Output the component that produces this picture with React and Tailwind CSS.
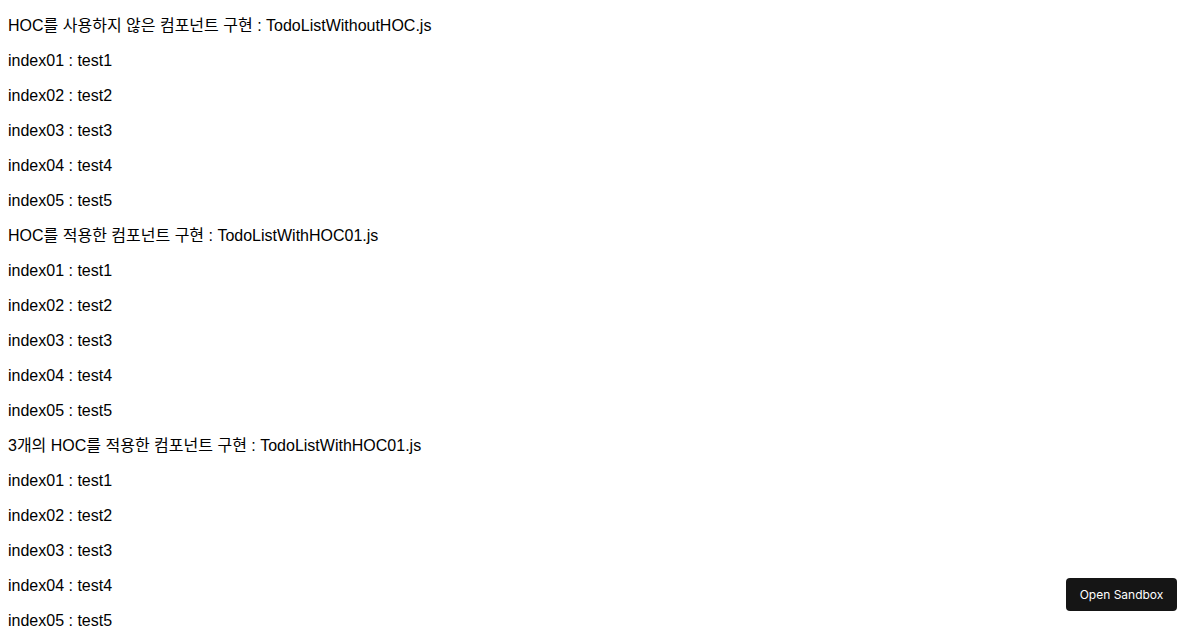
export default function App() {
  const items = ["index01 : test1", "index02 : test2", "index03 : test3", "index04 : test4", "index05 : test5"];
  const sections = [
    "HOC를 사용하지 않은 컴포넌트 구현 : TodoListWithoutHOC.js",
    "HOC를 적용한 컴포넌트 구현 : TodoListWithHOC01.js",
    "3개의 HOC를 적용한 컴포넌트 구현 : TodoListWithHOC01.js",
  ];
  return (
    <div
      className="relative min-h-[630px] bg-white px-2 pt-4 text-black text-[16px] leading-[19px]"
      style={{ fontFamily: '"Liberation Sans", Arial, "Noto Sans CJK KR", sans-serif' }}
    >
      <div className="flex flex-col gap-4">
        {sections.map((s, i) => (
          <div key={i} className="flex flex-col gap-4">
            <p>{s}</p>
            {items.map((it) => (
              <p key={it}>{it}</p>
            ))}
          </div>
        ))}
      </div>
      <div className="fixed bottom-[19px] right-[23px] flex h-[33px] w-[111px] items-center justify-center rounded-[4px] bg-[#151515] text-[12px] text-white"
        style={{ fontFamily: 'Inter, "Liberation Sans", sans-serif' }}>
        Open Sandbox
      </div>
    </div>
  );
}
